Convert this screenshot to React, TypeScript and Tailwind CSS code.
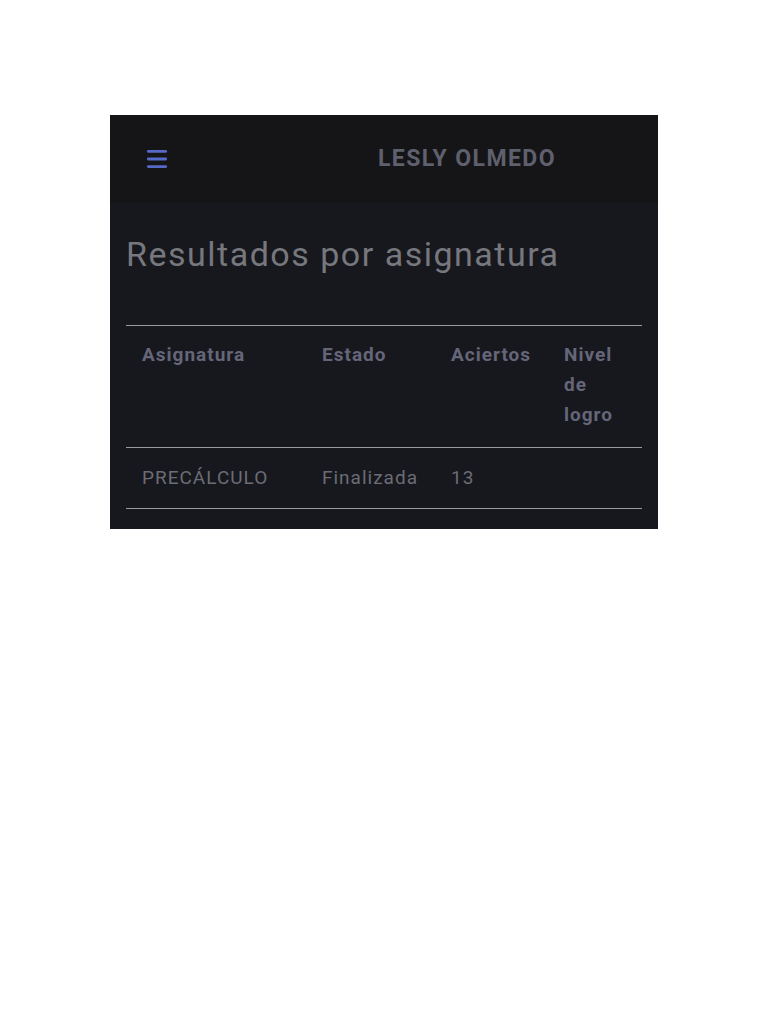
import { Menu } from "lucide-react";

const rows = [
  { asignatura: "PRECÁLCULO", estado: "Finalizada", aciertos: "13", nivel: "" },
];

export default function App() {
  return (
    <div className="min-h-screen bg-white pt-[115px] font-['Roboto',sans-serif]">
      <div className="mx-auto w-[548px] bg-[#17181d]">
        {/* Top bar */}
        <header className="flex h-[88px] items-center bg-[#151517] pl-[34px]">
          <Menu className="h-[26px] w-[26px] text-[#5569c8]" strokeWidth={2.6} />
          <h1 className="ml-[208px] text-[23px] font-bold tracking-[1.4px] text-[#5f606e]">LESLY OLMEDO</h1>
        </header>

        <main className="px-4 pt-[27px] pb-5">
          <h2 className="text-[34px] leading-[48px] tracking-[1.5px] text-[#77777e]">Resultados por asignatura</h2>

          <table className="mt-[47px] w-full border-collapse text-left text-[19px] tracking-[1px]">
            <thead>
              <tr className="border-y border-[#9a9aa0]">
                <th className="w-[180px] px-4 pt-[14px] pb-[17px] align-top font-bold leading-[30px] text-[#65667a]">Asignatura</th>
                <th className="w-[129px] px-4 pt-[14px] pb-[17px] align-top font-bold leading-[30px] text-[#65667a]">Estado</th>
                <th className="w-[113px] px-4 pt-[14px] pb-[17px] align-top font-bold leading-[30px] text-[#65667a]">Aciertos</th>
                <th className="px-4 pt-[14px] pb-[17px] align-top font-bold leading-[30px] text-[#65667a]">
                  Nivel de logro
                </th>
              </tr>
            </thead>
            <tbody>
              {rows.map((r) => (
                <tr key={r.asignatura} className="border-b border-[#9a9aa0]">
                  <td className="px-4 py-[15px] leading-[30px] text-[#6b6c76]">{r.asignatura}</td>
                  <td className="px-4 py-[15px] leading-[30px] text-[#6b6c76]">{r.estado}</td>
                  <td className="px-4 py-[15px] leading-[30px] text-[#6b6c76]">{r.aciertos}</td>
                  <td className="px-4 py-[15px] leading-[30px] text-[#6b6c76]">{r.nivel}</td>
                </tr>
              ))}
            </tbody>
          </table>
        </main>
      </div>
    </div>
  );
}
